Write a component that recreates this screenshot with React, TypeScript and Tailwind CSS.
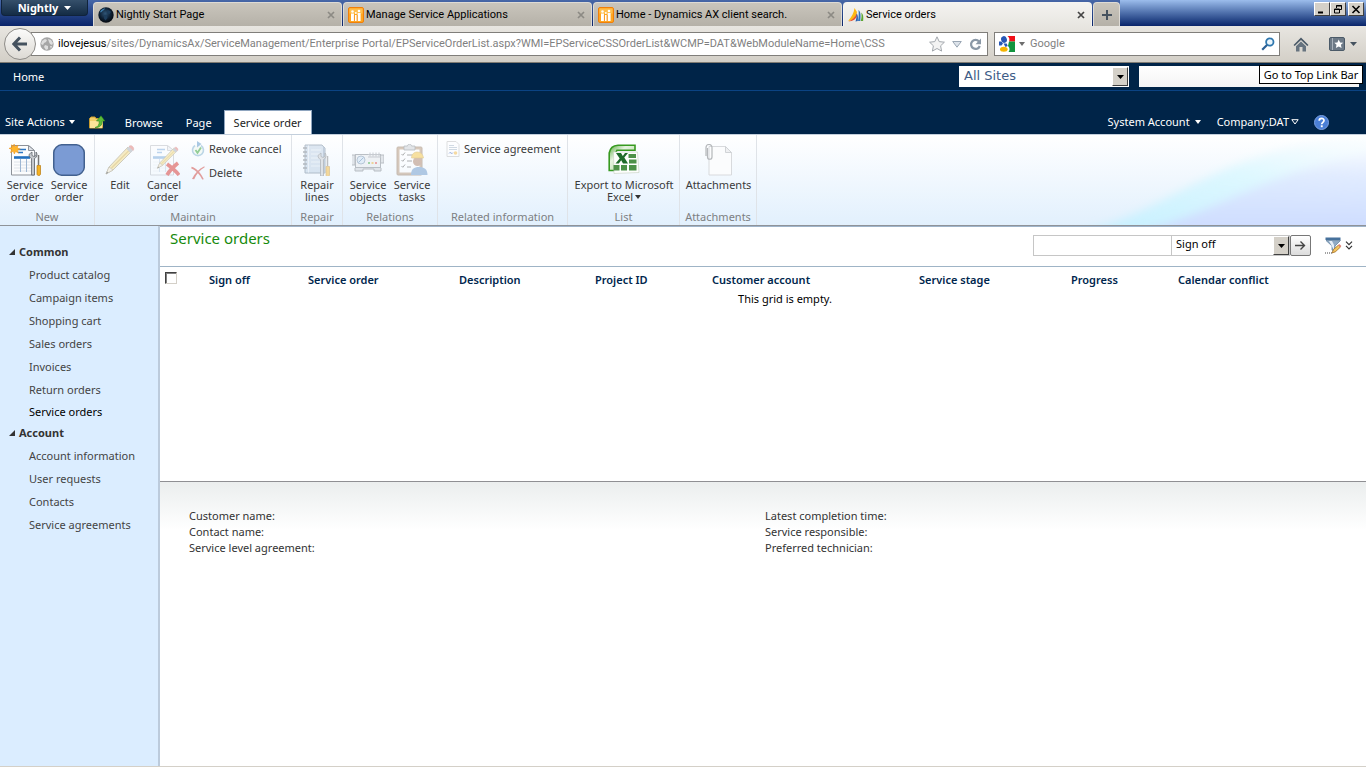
import type { ReactNode } from 'react';
import { useState } from 'react';

interface BrowserTab {
  title: string;
  icon: ReactNode;
}

interface NavSection {
  title: string;
  items: string[];
}

/* ---------- browser icons ---------- */

const GlobeDarkIcon = () => (
  <svg width="16" height="16" viewBox="0 0 16 16" className="shrink-0" aria-hidden="true">
    <defs>
      <radialGradient id="night" cx="45%" cy="40%" r="60%">
        <stop offset="0" stopColor="#2f5577" />
        <stop offset="0.6" stopColor="#0e2033" />
        <stop offset="1" stopColor="#05090f" />
      </radialGradient>
    </defs>
    <circle cx="8" cy="8" r="7.7" fill="url(#night)" />
    <path d="M2 5c1-2 3-3.500 5-3.700-.5 1.500-1.500 2-2.500 2.700C3.500 5 3 6 2 5z" fill="#3f7fae" />
    <path d="M9 3.500c1.500-.8 3 .2 4 1.500l-1.500 2-2-.5zM6 8l3 .5.5 2.500-2 2.500-1.500-2z" fill="#1d3d5c" />
  </svg>
);

const SharePointIcon = () => (
  <svg width="16" height="16" viewBox="0 0 16 16" className="shrink-0" aria-hidden="true">
    <rect x="0.500" y="0.500" width="15" height="15" rx="1.500" fill="#ffa51f" stroke="#f07f09" />
    <rect x="1.500" y="1.500" width="13" height="5" fill="#ffbe4d" />
    <circle cx="4.500" cy="4.500" r="1.300" fill="#fff" />
    <circle cx="11" cy="4" r="1.300" fill="#fff" />
    <circle cx="7.800" cy="6" r="1" fill="#fff" />
    <path d="M3 6.500h3V14H3zM9.600 6h3v8h-3zM6.800 8h2v6h-2z" fill="#fff" />
    <path d="M6.400 8v6M9.200 8v6" stroke="#f9921a" strokeWidth="0.800" />
  </svg>
);

const DynamicsIcon = () => (
  <svg width="16" height="16" viewBox="0 0 16 16" className="shrink-0" aria-hidden="true">
    <path d="M.5 13.500C3.500 10 6 6 6.500 1L9 5c-.5 4-3 8-8.500 9z" fill="#fdb813" />
    <path d="M.3 14.500C4 13 7 10.500 8.800 6.500L9 9c-1.500 3.500-4 5-8.700 5.500z" fill="#e8502f" />
    <path d="M8.500 6.500c1 .5 1.800 3 1.300 7.500l-2.300.5c.8-2 1.200-5 1-8z" fill="#2c5fae" />
    <path d="M10.500 3c2 1.500 2.500 5 1.800 11H10c.8-4 .9-7 .5-11z" fill="#2f75bd" />
    <path d="M13.300 5.500c2 1.500 2.300 4.500 1.800 8.500h-2.300c.8-3 .9-5.500.5-8.500z" fill="#5fa832" />
  </svg>
);

const CloseIcon = ({ dark }: { dark?: boolean }) => (
  <svg width="8" height="8" viewBox="0 0 8 8" aria-hidden="true">
    <path d="M1 1l6 6M7 1L1 7" stroke={dark ? '#444' : '#8c8a84'} strokeWidth="1.700" />
  </svg>
);

const BackIcon = () => (
  <svg width="16" height="16" viewBox="0 0 16 16" aria-hidden="true">
    <path d="M8 1.500L1.800 8 8 14.500M2.500 8H15" fill="none" stroke="#45525f" strokeWidth="3" />
  </svg>
);

const GlobeIcon = () => (
  <svg width="14" height="14" viewBox="0 0 14 14" className="shrink-0" aria-hidden="true">
    <circle cx="7" cy="7" r="6.700" fill="#a6a6a6" />
    <path d="M2 4l3-2 2 1-1 2-2 1-1 2-2-1zM8 2l3 1 2 3-1 2-2-1-1-2zM5 8l3 1v3l-2 1-2-3zM10 9l2 0-1 3z" fill="#dedede" />
  </svg>
);

const StarIcon = () => (
  <svg width="16" height="16" viewBox="0 0 16 16" aria-hidden="true">
    <path d="M8 .8l2.200 4.800 5.200.6-3.800 3.600 1 5.300L8 12.500l-4.600 2.600 1-5.300L.6 6.200l5.200-.6z" fill="#f3f3f3" stroke="#a3a8ad" />
  </svg>
);

const ReloadIcon = () => (
  <svg width="13" height="13" viewBox="0 0 13 13" aria-hidden="true">
    <path d="M10 3.500A4.500 4.500 0 1 0 10.800 8" fill="none" stroke="#8a98a6" strokeWidth="2.200" />
    <path d="M12 .5v5.700H6.500z" fill="#8a98a6" />
  </svg>
);

const GoogleIcon = () => (
  <svg width="16" height="16" viewBox="0 0 16 16" className="shrink-0" aria-hidden="true">
    <rect width="16" height="16" fill="#fff" />
    <path d="M8.500 0H16v5.500h-6c.8-2 .5-4-1.500-5.500z" fill="#f01018" />
    <path d="M10 5.500h6V16H9.500c1.500-2 1.500-4-.5-6z" fill="#12943e" />
    <path d="M0 5.500h2.500l1.500 2-1.500 2H0z" fill="#2757b5" />
    <ellipse cx="5" cy="3.500" rx="2.900" ry="3.400" fill="#2757b5" transform="rotate(-15 5 3.500)" />
    <path d="M4.500 7.500h3.200l1 2.500-2.200 1z" fill="#2757b5" />
    <ellipse cx="4.800" cy="13.200" rx="3.800" ry="2.500" fill="#f4b400" />
  </svg>
);

const MagnifierIcon = () => (
  <svg width="14" height="14" viewBox="0 0 14 14" aria-hidden="true">
    <circle cx="8.800" cy="5" r="3.700" fill="#eaf5fc" stroke="#2f77ae" strokeWidth="1.800" />
    <path d="M6 8L1.200 12.800" stroke="#2a5f95" strokeWidth="2.200" />
  </svg>
);

const HomeIcon = () => (
  <svg width="16" height="15" viewBox="0 0 16 15" aria-hidden="true">
    <path d="M8 .5L15.500 8l-1.200 1L8 3 1.700 9 .5 8z" fill="#4b5a68" />
    <path d="M8 4.500l5 4.700V14.500H9.500V10h-3v4.500H3V9.200z" fill="#66737f" />
  </svg>
);

const BookmarksIcon = () => (
  <svg width="16" height="14" viewBox="0 0 16 14" aria-hidden="true">
    <rect x="0.500" y="0.500" width="15" height="13" rx="1.500" fill="#6d7a87" stroke="#4b5a68" />
    <path d="M3.500 1v12" stroke="#aab3bc" />
    <path d="M9.700 2.500l1.400 2.900 3.100.3-2.300 2.100.7 3.200-2.900-1.600L6.900 11l.6-3.200-2.200-2.100 3.100-.3z" fill="#fff" />
  </svg>
);

const Caret = ({ color = '#fff', width = 7 }: { color?: string; width?: number }) => (
  <svg width={width} height="4" viewBox="0 0 8 4" preserveAspectRatio="none" className="shrink-0" aria-hidden="true">
    <path d="M0 0h8L4 4z" fill={color} />
  </svg>
);

/* ---------- page icons ---------- */

const FolderUpIcon = () => (
  <svg width="16" height="14" viewBox="0 0 16 14" aria-hidden="true">
    <path d="M.5 3.500L2 2h4l1 1.500h6.500V13H.5z" fill="#f2cf6b" stroke="#c79a2e" />
    <path d="M1 6h13l-1 7H1z" fill="#fbe49a" />
    <path d="M6 12.500c3-.5 4.500-3 4.200-6.500H7.500L12 .8 15.800 6h-2.500c.2 4-2.800 7-7.300 6.500z" fill="#5dbb3a" stroke="#2f8a1d" strokeWidth="0.600" />
  </svg>
);

const HelpIcon = () => (
  <svg width="15" height="15" viewBox="0 0 15 15" aria-hidden="true">
    <circle cx="7.500" cy="7.500" r="7" fill="#4a7fd6" stroke="#7ba1e3" />
    <path d="M5.200 5.800c0-3.200 4.800-3.100 4.800-.3 0 1.800-2.300 1.800-2.300 3.700" fill="none" stroke="#fff" strokeWidth="1.700" />
    <rect x="6.800" y="10.300" width="1.900" height="1.900" fill="#fff" />
  </svg>
);

const ReportSheet = () => (
  <>
    <path d="M2.500 1.500h17l6 5v24.500h-23z" fill="#fbfcfd" stroke="#8d9299" />
    <path d="M19.500 1.500v5h6z" fill="#dfe3e8" stroke="#8d9299" />
    <path d="M9 5.500h8M9 8.500h5" stroke="#2d77c4" strokeWidth="1.400" />
    <path d="M5 13.500h16" stroke="#2270bf" strokeWidth="2.600" />
    <path d="M5 18h18M5 21h18M5 24h18M5 27h18" stroke="#dfe4ea" />
    <path d="M11.500 15v13M17.500 15v13" stroke="#9db6d2" />
  </>
);

const Wrench = () => (
  <>
    <path d="M20 10.500c0 2 1 3.300 2.500 4V31h3V14.500c1.500-.7 2.500-2 2.500-4 0-1-.5-2-1-2.500v3.500l-2 1-2-1V8c-.8.700-2 1.500-3 2.500z" fill="#c4c8cd" stroke="#63686e" strokeWidth="0.800" />
    <path d="M29.500 11v10" stroke="#777" strokeWidth="1.500" />
    <path d="M28 21.500h3.500V30c0 2-3.500 2-3.500 0z" fill="#f5b223" stroke="#b87a10" strokeWidth="0.700" />
  </>
);

const ServiceOrderIcon = () => (
  <svg width="32" height="32" viewBox="0 0 32 32" aria-hidden="true">
    <ReportSheet />
    <Wrench />
    <path d="M5 0l1.200 2.800L9 1.200 8.300 4l3 1-2.900 1.200 1 2.800-2.800-1.500L5.300 10l-1-2.700L1.500 8.500l1.200-2.900L0 4.300l3-.8L2.500.8l2.200 1.800z" fill="#ffb52b" stroke="#ef8e11" strokeWidth="0.500" />
  </svg>
);

const OctagonIcon = () => (
  <svg width="32" height="32" viewBox="0 0 32 32" aria-hidden="true">
    <path d="M8.500.75h15C27 .75 31.250 5 31.250 8.500v15c0 3.500-4.250 7.750-7.750 7.750h-15C5 31.250.75 27 .75 23.500v-15C.75 5 5 .75 8.500.75z" fill="#7b9bd4" stroke="#42618f" strokeWidth="1.500" />
  </svg>
);

const PencilShape = () => (
  <>
    <path d="M2 30l3-7L24 3l4 4L9 26z" fill="#f3dc8b" stroke="#8f8566" strokeWidth="0.800" />
    <path d="M7.500 24L26 5.500" stroke="#d8b44c" strokeWidth="1.200" />
    <path d="M5 23l4 3L2 30z" fill="#f4e8cf" stroke="#8f8566" strokeWidth="0.600" />
    <path d="M22.500 5l4 4 2.500-2.500-4-4z" fill="#a7adb5" />
    <path d="M25 2.500c2-2.500 6 1 4.200 4z" fill="#e37b74" stroke="#b55" strokeWidth="0.500" />
    <path d="M2 30l1-2.400 1.400 1.200z" fill="#444" />
  </>
);

const EditIcon = () => (
  <svg width="32" height="32" viewBox="0 0 32 32" className="opacity-50" aria-hidden="true">
    <PencilShape />
  </svg>
);

const CancelOrderIcon = () => (
  <svg width="32" height="32" viewBox="0 0 32 32" className="opacity-50" aria-hidden="true">
    <g opacity="0.6">
      <ReportSheet />
    </g>
    <g transform="translate(8 2) scale(.74)">
      <PencilShape />
    </g>
    <path d="M19 20c4 3 8 6 12 11M30 19c-4 3-8 7-11 12" stroke="#d8342e" strokeWidth="3.600" />
  </svg>
);

const RevokeIcon = () => (
  <svg width="14" height="16" viewBox="0 0 14 16" className="opacity-50" aria-hidden="true">
    <path d="M4 4.500A5.500 5.500 0 1 0 10 4.500" fill="#eef7ee" stroke="#7fb0cf" strokeWidth="1.600" />
    <path d="M6 0l4.500 3L6 6.500z" fill="#5b95c9" />
    <path d="M4.500 9l2 2.800L10 6.500" fill="none" stroke="#2fa02f" strokeWidth="1.800" />
  </svg>
);

const DeleteIcon = () => (
  <svg width="14" height="14" viewBox="0 0 14 14" className="opacity-50" aria-hidden="true">
    <path d="M.5 .8C5 2 10 7 12.800 13.200l-1.600.3C9 9 5 4.500.3 2.600zM13.300.3l.4.900C9 4 5.500 8 3.200 13.200L1 13C3.500 7.500 8 3 13.300.3z" fill="#d0433c" />
  </svg>
);

const RepairIcon = () => (
  <svg width="32" height="32" viewBox="0 0 32 32" className="opacity-45" aria-hidden="true">
    <path d="M4 1h17l3 3v25H4z" fill="#b7cbe1" stroke="#5f7489" />
    <path d="M21 1l3 3v25l-2-2V3z" fill="#7f98b4" />
    <path d="M7.500 1.500v27M10 6h10M10 10h10M10 14h10M10 18h10M10 22h10" stroke="#dfe9f3" />
    <path d="M2 4h4M2 8h4M2 12h4M2 16h4M2 20h4M2 24h4" stroke="#606a74" strokeWidth="1.300" />
    <g transform="translate(-3 1)">
      <Wrench />
    </g>
  </svg>
);

const ObjectsIcon = () => (
  <svg width="32" height="32" viewBox="0 0 32 32" className="opacity-45" aria-hidden="true">
    <path d="M0 11h3v10H0M29 11h3v8h-3" fill="#c7ccd2" stroke="#70777f" />
    <rect x="3.500" y="10.500" width="25" height="13" fill="#e5e8eb" stroke="#70777f" />
    <path d="M16 10.500h12M16 13h13M18 8.500v4M21 8.500v4M24 8.500v4M27 8.500v4" stroke="#8b929a" />
    <circle cx="9" cy="16" r="4" fill="#c8ddf0" stroke="#6d8aa8" />
    <path d="M6.500 18.500l5-5" stroke="#4a7eb0" />
    <rect x="16" y="18" width="2" height="2" fill="#37a23a" />
    <rect x="19.500" y="18" width="2" height="2" fill="#e4a71f" />
    <rect x="23" y="18" width="2" height="2" fill="#d44" />
    <path d="M3 24v3h8v-2h11v2h7v-3" fill="#c7ccd2" stroke="#70777f" />
  </svg>
);

const TasksIcon = () => (
  <svg width="32" height="32" viewBox="0 0 32 32" className="opacity-45" aria-hidden="true">
    <rect x="1" y="3" width="25" height="28" rx="1" fill="#b08c6c" stroke="#8c6e54" />
    <rect x="3.500" y="5.500" width="20" height="23" fill="#fff" />
    <path d="M8 2h3.500c0-2.500 4-2.500 4 0H19v4H8z" fill="#c4c9ce" stroke="#666d74" strokeWidth="0.800" />
    <path d="M5.500 10l1.300 1.300L9 8.500M5.500 16l1.300 1.300L9 14.500M5.500 22l1.300 1.300L9 20.500M11 11h6M11 17h5M11 23h4" fill="none" stroke="#555" />
    <path d="M15 31c0-6 3-8 8-8s8.500 2 8.500 8z" fill="#5f8fc4" />
    <circle cx="21.500" cy="17.500" r="4.500" fill="#a8775a" />
    <path d="M15.500 14c0-8 11-8 12 0z" fill="#f6c02f" stroke="#c3921a" strokeWidth="0.600" />
  </svg>
);

const AgreementIcon = () => (
  <svg width="14" height="16" viewBox="0 0 14 16" className="opacity-45" aria-hidden="true">
    <path d="M1 .5h9l3 3v12H1z" fill="#fff" stroke="#b9b9b9" />
    <path d="M3 4.500h5M3 6.500h8M3 8.500h8" stroke="#9fb0c2" />
    <path d="M3 12.500l1.500-1.500 1 2 1.500-1.500" fill="none" stroke="#3c62c0" />
    <circle cx="9.500" cy="12" r="1.800" fill="#f2b233" />
  </svg>
);

const ExcelIcon = () => (
  <svg width="32" height="32" viewBox="0 0 32 32" aria-hidden="true">
    <defs>
      <linearGradient id="xl" x1="0" y1="0" x2="1" y2="1">
        <stop offset="0" stopColor="#5fae45" />
        <stop offset="0.350" stopColor="#e6f3e0" />
        <stop offset="1" stopColor="#9ccf86" />
      </linearGradient>
    </defs>
    <path d="M1.200 26.500V9C2 4 5 1.500 10 1.200h17v5H9l-2 4v16.300z" fill="url(#xl)" stroke="#379a20" strokeWidth="1.600" />
    <path d="M5.500 8h24l1.500 20.500-25 1z" fill="#fdfefc" stroke="#c4cfbf" strokeWidth="0.600" />
    <path d="M20.500 10h7.500v4h-7.500zM21 15.500h7.500v4H21zM5.500 21h6v5.500h-6zM13 21h6v5.500h-6zM21 21h7.500v5.500H21z" fill="#4d9148" />
    <path d="M8 9h5l1.800 3L17 9h3l-3.700 4.500L20 19.500h-5l-1.800-3.300-2.400 3.300H7.500l4.200-5z" fill="#1f6b2a" />
  </svg>
);

const AttachmentIcon = () => (
  <svg width="32" height="32" viewBox="0 0 32 32" aria-hidden="true">
    <path d="M6 2.500h16.500l6 6V31H6z" fill="#fbfcfd" stroke="#d8dadd" />
    <path d="M22.500 2.500v6h6z" fill="#eff0f2" stroke="#d0d3d6" />
    <path d="M4.500 4v9c0 3 4.500 3 4.500 0V3.500c0-4-6-4-6 0V12" fill="none" stroke="#b4b7ba" strokeWidth="1.200" />
  </svg>
);

const FilterIcon = () => (
  <svg width="17" height="17" viewBox="0 0 17 17" aria-hidden="true">
    <rect x="0.500" y="0.500" width="15" height="2.500" fill="#46719c" />
    <path d="M1 3.500h14.500L10 9v6l-3-2V9z" fill="#8fa9c4" stroke="#5c7c9c" strokeWidth="0.700" />
    <path d="M4 4h3l2 4v5z" fill="#e8f0f8" />
    <path d="M7 16l1.500-3.500L13.500 8l2 2-5 4.700z" fill="#f4c660" stroke="#a66f22" strokeWidth="0.800" />
    <path d="M13.200 8.200l1.200-1.200 2 2-1.200 1.200z" fill="#e0817a" />
    <path d="M0 16h7" stroke="#444" strokeDasharray="1 1" />
  </svg>
);

const RibbonSwoosh = () => (
  <svg viewBox="0 0 380 90" preserveAspectRatio="none" className="absolute top-0 right-0 h-full w-[380px]" aria-hidden="true">
    <defs>
      <linearGradient id="sw1" x1="0" y1="1" x2="0.900" y2="0">
        <stop offset="0" stopColor="#c4efff" />
        <stop offset="0.600" stopColor="#dcf8ff" stopOpacity="0.900" />
        <stop offset="1" stopColor="#f2fcff" stopOpacity="0.200" />
      </linearGradient>
      <linearGradient id="sw2" x1="0" y1="1" x2="0" y2="0">
        <stop offset="0" stopColor="#ccdbff" />
        <stop offset="0.700" stopColor="#dfe8ff" stopOpacity="0.800" />
        <stop offset="1" stopColor="#f0f0ff" stopOpacity="0.300" />
      </linearGradient>
      <filter id="soft" x="-10%" y="-20%" width="120%" height="140%">
        <feGaussianBlur stdDeviation="5" />
      </filter>
    </defs>
    <g filter="url(#soft)">
      <path d="M90 98C190 78 220 12 400 -2v100z" fill="url(#sw1)" />
      <path d="M150 98C230 78 290 30 400 16v82z" fill="url(#sw2)" />
    </g>
  </svg>
);

/* ---------- data ---------- */

const browserTabs: BrowserTab[] = [
  { title: 'Nightly Start Page', icon: <GlobeDarkIcon /> },
  { title: 'Manage Service Applications', icon: <SharePointIcon /> },
  { title: 'Home - Dynamics AX client search.', icon: <SharePointIcon /> },
  { title: 'Service orders', icon: <DynamicsIcon /> },
];

const navSections: NavSection[] = [
  {
    title: 'Common',
    items: ['Product catalog', 'Campaign items', 'Shopping cart', 'Sales orders', 'Invoices', 'Return orders', 'Service orders'],
  },
  {
    title: 'Account',
    items: ['Account information', 'User requests', 'Contacts', 'Service agreements'],
  },
];

const columns = [
  { label: 'Sign off', width: 'w-[99px]' },
  { label: 'Service order', width: 'w-[151px]' },
  { label: 'Description', width: 'w-[136px]' },
  { label: 'Project ID', width: 'w-[117px]' },
  { label: 'Customer account', width: 'w-[207px]' },
  { label: 'Service stage', width: 'w-[152px]' },
  { label: 'Progress', width: 'w-[107px]' },
  { label: 'Calendar conflict', width: '' },
];

const detailFields = [
  ['Customer name:', 'Contact name:', 'Service level agreement:'],
  ['Latest completion time:', 'Service responsible:', 'Preferred technician:'],
];

/* ---------- parts ---------- */

function RibbonGroup({ title, width, children }: { title: string; width: string; children: ReactNode }) {
  return (
    <div className={`${width} shrink-0 flex flex-col border-r border-[#dfe3e8]`}>
      <div className="flex-1 flex pl-[3px] pr-[2px] pt-[9px]">{children}</div>
      <div className="text-center text-[#7d7f82] leading-4 whitespace-nowrap">{title}</div>
    </div>
  );
}

function BigButton({ icon, width = 'w-11', lines }: { icon: ReactNode; width?: string; lines: ReactNode[] }) {
  return (
    <button className={`${width} flex flex-col items-center text-[#3b3b3b] leading-3 whitespace-nowrap`}>
      <span className="pb-[3px]">{icon}</span>
      {lines.map((line, index) => (
        <span key={index} className="flex items-center gap-[2px]">{line}</span>
      ))}
    </button>
  );
}

function SmallButton({ icon, children }: { icon: ReactNode; children: ReactNode }) {
  return (
    <button className="flex items-center gap-1 h-6 pl-[3px] text-[#3b3b3b] leading-4 whitespace-nowrap">
      {icon}
      {children}
    </button>
  );
}

// Classic raised arrow on the right edge of a drop-down
function DropArrow() {
  return (
    <span className="absolute right-[1px] top-[1px] bottom-[1px] w-4 flex items-center justify-center bg-[#d4d0c8] border border-t-white border-l-white border-r-[#404040] border-b-[#404040] pointer-events-none">
      <Caret color="#000" width={7} />
    </span>
  );
}

function WindowButton({ label, children }: { label: string; children: ReactNode }) {
  return (
    <button
      aria-label={label}
      className="w-4 h-[14px] flex items-center justify-center bg-[#d4d0c8] border border-t-white border-l-white border-r-[#404040] border-b-[#404040]"
    >
      <svg width="10" height="9" viewBox="0 0 10 9" fill="none" stroke="#000" aria-hidden="true">
        {children}
      </svg>
    </button>
  );
}

function BrowserChrome() {
  const [search, setSearch] = useState('');

  return (
    <div className="text-[11px] leading-4 text-black font-[Tahoma,Roboto,sans-serif]">
      {/* Title bar and tabs */}
      <div className="h-[26px] flex items-start bg-linear-to-b from-[#4868a8] to-[#0a246a]">
        <div className="flex-1 min-w-0 flex items-start">
          <button className="w-[87px] h-4 ml-[1px] mr-[5px] shrink-0 flex items-center justify-center gap-[6px] rounded-b-sm border border-t-0 border-[#10233c] bg-linear-to-b from-[#35506b] to-[#142c45] text-white font-bold font-['Segoe_UI','Noto_Sans',sans-serif]">
            Nightly
            <Caret />
          </button>
          <div className="flex items-start gap-[1px] pt-[2px] min-w-0">
            {browserTabs.map((tab, index) => {
              const active = index === browserTabs.length - 1;
              return (
                <div
                  key={tab.title}
                  className={`w-[249px] h-6 min-w-0 flex items-center pl-1 pr-[2px] rounded-t-sm border border-b-0 ${
                    active
                      ? 'bg-linear-to-b from-[#f4f3f0] to-[#e8e6e1] border-[#f6f5f2]'
                      : 'bg-linear-to-b from-[#c9c5bc] to-[#b5b1a8] border-[#dedbd5]'
                  }`}
                >
                  {tab.icon}
                  <span className="flex-1 min-w-0 pl-[2px] truncate">{tab.title}</span>
                  <button aria-label={`Close ${tab.title}`} className="p-1">
                    <CloseIcon dark={active} />
                  </button>
                </div>
              );
            })}
            <button aria-label="New tab" className="w-[27px] h-6 shrink-0 flex items-center justify-center rounded-t-sm border border-b-0 border-[#dedbd5] bg-linear-to-b from-[#c9c5bc] to-[#b5b1a8]">
              <svg width="10" height="10" viewBox="0 0 10 10" aria-hidden="true">
                <path d="M5 0v10M0 5h10" stroke="#45525f" strokeWidth="2" />
              </svg>
            </button>
          </div>
        </div>
        <div className="grow max-w-[246px] self-stretch flex justify-end pt-[2px] bg-linear-to-b from-[#9cbdec] to-[#0a246a]">
          <WindowButton label="Minimize">
            <path d="M1 7.500h5" strokeWidth="2" />
          </WindowButton>
          <WindowButton label="Restore">
            <path d="M3.500 3V.5h5v4H7M3 1h6M1.500 4h5v4h-5zM1 4.500h6" />
          </WindowButton>
          <div className="ml-[2px] mr-[2px]">
            <WindowButton label="Close">
              <path d="M1.500 1l7 7M8.500 1l-7 7" strokeWidth="1.600" />
            </WindowButton>
          </div>
        </div>
      </div>

      {/* Navigation bar */}
      <div className="h-[37px] flex items-center pl-1 pr-[9px] border-b border-[#7f7b73] bg-linear-to-b from-[#e8e6e1] to-[#d3cfc7]">
        <button aria-label="Back" className="relative z-10 w-8 h-8 shrink-0 flex items-center justify-center rounded-full border border-[#8e8c88] bg-linear-to-b from-[#fbfbfa] to-[#dddad4]">
          <BackIcon />
        </button>
        <div className="flex-1 min-w-0 h-6 -ml-[5px] pl-2 pr-[5px] flex items-center gap-1 border border-[#807e7a] bg-white">
          <GlobeIcon />
          <div className="flex-1 min-w-0 truncate text-[#7f7f7f]">
            <span className="text-black">ilovejesus</span>
            /sites/DynamicsAx/ServiceManagement/Enterprise Portal/EPServiceOrderList.aspx?WMI=EPServiceCSSOrderList&WCMP=DAT&WebModuleName=Home\CSS
          </div>
          <button aria-label="Bookmark this page"><StarIcon /></button>
          <button aria-label="History" className="px-[3px]">
            <svg width="10" height="7" viewBox="0 0 10 7" aria-hidden="true">
              <path d="M.7.500h8.600L5 6.200z" fill="#dde3ea" stroke="#9aa6b3" />
            </svg>
          </button>
          <button aria-label="Reload"><ReloadIcon /></button>
        </div>
        <div className="w-[286px] h-6 ml-[6px] px-1 flex items-center border border-[#807e7a] bg-white">
          <GoogleIcon />
          <span className="pl-1 pr-[1px]"><Caret color="#6d6d6d" width={6} /></span>
          <input
            aria-label="Search with Google"
            placeholder="Google"
            value={search}
            onChange={(e) => setSearch(e.target.value)}
            className="flex-1 min-w-0 pl-1 outline-none placeholder:text-[#7f7f7f]"
          />
          <button aria-label="Search"><MagnifierIcon /></button>
        </div>
        <button aria-label="Home page" className="ml-[13px]"><HomeIcon /></button>
        <button aria-label="Bookmarks" className="ml-5 flex items-center gap-[5px]">
          <BookmarksIcon />
          <Caret color="#45525f" width={7} />
        </button>
      </div>
    </div>
  );
}

function TopBar() {
  return (
    <header className="bg-[#002448] text-white">
      <div className="relative h-7 flex items-center border-b border-[#0b4383] pl-[13px] pr-[7px]">
        <a href="#home" className="flex-1">Home</a>
        <div className="relative w-[170px] h-[21px]">
          <select aria-label="Search scope" className="appearance-none w-full h-full pl-[5px] pb-[2px] bg-white text-[#3e5c87] text-[13px] leading-4 outline-none font-[Verdana,'DejaVu_Sans',sans-serif]">
            <option>All Sites</option>
          </select>
          <DropArrow />
        </div>
        <input aria-label="Search this site" className="w-[220px] h-[21px] ml-[10px] px-1 bg-linear-to-b from-white to-[#f4f4f4] text-black" />
        <div role="tooltip" className="absolute right-[3px] top-[2px] w-[104px] h-[19px] border border-black bg-white text-black text-center leading-[17px] whitespace-nowrap">
          Go to Top Link Bar
        </div>
      </div>

      <div className="h-[43px] flex items-end">
        <button className="h-6 pl-[5px] flex items-center gap-1">
          Site Actions
          <Caret width={6} />
        </button>
        <button aria-label="Navigate up" className="h-6 ml-[14px] mr-[9px] flex items-center"><FolderUpIcon /></button>
        <nav className="flex">
          <a href="#browse" className="h-6 px-[11px] leading-[26px]">Browse</a>
          <a href="#page" className="h-6 px-3 leading-[26px]">Page</a>
          <a href="#service-order" className="h-6 px-[9px] leading-6 border border-b-0 border-[#8fa5bf] bg-white text-[#222]">Service order</a>
        </nav>
        <div className="ml-auto h-6 flex items-center pr-[37px]">
          <button className="flex items-center gap-[5px]">
            System Account
            <Caret width={6} />
          </button>
          <button className="ml-4 flex items-center gap-[2px]">
            Company:DAT
            <svg width="8" height="6" viewBox="0 0 8 6" aria-hidden="true">
              <path d="M.8.700h6.400L4 5z" fill="none" stroke="#fff" />
            </svg>
          </button>
          <button aria-label="Help" className="ml-[15px]"><HelpIcon /></button>
        </div>
      </div>
    </header>
  );
}

function Ribbon() {
  return (
    <div className="relative h-[92px] flex border-t border-b border-t-[#c3cfdc] border-b-[#8f9399] bg-linear-to-b from-white to-[#e2f0fd]">
      <RibbonSwoosh />
      <RibbonGroup title="New" width="w-[95px]">
        <BigButton icon={<ServiceOrderIcon />} lines={['Service', 'order']} />
        <BigButton icon={<OctagonIcon />} lines={['Service', 'order']} />
      </RibbonGroup>
      <RibbonGroup title="Maintain" width="w-[197px]">
        <BigButton icon={<EditIcon />} lines={['Edit']} />
        <BigButton icon={<CancelOrderIcon />} lines={['Cancel', 'order']} />
        <div className="pl-[2px] -mt-[7px] flex flex-col">
          <SmallButton icon={<RevokeIcon />}>Revoke cancel</SmallButton>
          <SmallButton icon={<DeleteIcon />}>Delete</SmallButton>
        </div>
      </RibbonGroup>
      <RibbonGroup title="Repair" width="w-[51px]">
        <BigButton icon={<RepairIcon />} lines={['Repair', 'lines']} />
      </RibbonGroup>
      <RibbonGroup title="Relations" width="w-[95px]">
        <BigButton icon={<ObjectsIcon />} lines={['Service', 'objects']} />
        <BigButton icon={<TasksIcon />} lines={['Service', 'tasks']} />
      </RibbonGroup>
      <RibbonGroup title="Related information" width="w-[130px]">
        <div className="pl-[2px] -mt-[7px]">
          <SmallButton icon={<AgreementIcon />}>Service agreement</SmallButton>
        </div>
      </RibbonGroup>
      <RibbonGroup title="List" width="w-[112px]">
        <BigButton
          icon={<ExcelIcon />}
          width="w-full"
          lines={['Export to Microsoft', <>Excel <Caret color="#333" width={6} /></>]}
        />
      </RibbonGroup>
      <RibbonGroup title="Attachments" width="w-[77px]">
        <BigButton icon={<AttachmentIcon />} width="w-full" lines={['Attachments']} />
      </RibbonGroup>
    </div>
  );
}

function Sidebar() {
  return (
    <nav className="w-40 shrink-0 pt-[15px] bg-[#dbedff] border-r-2 border-[#bccbdc]">
      {navSections.map((section) => (
        <div key={section.title}>
          <h2 className="h-[22px] flex items-center gap-1 pl-[9px] font-bold text-[#333]">
            <svg width="6" height="6" viewBox="0 0 6 6" aria-hidden="true">
              <path d="M6 0v6H0z" fill="#333" />
            </svg>
            {section.title}
          </h2>
          <ul>
            {section.items.map((item) => (
              <li key={item}>
                <a
                  href="#list"
                  className={`block pl-[29px] ${item === 'Service orders' ? 'leading-[21px] text-black' : 'leading-[23px] text-[#444]'}`}
                >
                  {item}
                </a>
              </li>
            ))}
          </ul>
        </div>
      ))}
    </nav>
  );
}

function OrderList() {
  return (
    <main className="flex-1 min-w-0 flex flex-col border-t border-[#9fb4ca] bg-white">
      <div className="h-10 flex items-start border-b border-[#9fb4c6] pl-[10px] pr-[13px]">
        <h1 className="flex-1 text-[15px] leading-[22px] text-[#168a0c]">Service orders</h1>
        <div className="flex items-center pt-2">
          <input aria-label="Filter text" className="w-[139px] h-[21px] px-1 border border-[#c6c6c6] outline-none" />
          <div className="relative w-[119px] h-[21px] -ml-[1px]">
            <select aria-label="Filter field" className="appearance-none w-full h-full pl-1 pb-[3px] border border-[#c6c6c6] bg-white text-black outline-none">
              {columns.map((column) => (
                <option key={column.label}>{column.label}</option>
              ))}
            </select>
            <DropArrow />
          </div>
          <button aria-label="Apply filter" className="w-[21px] h-[21px] flex items-center justify-center rounded-xs border border-[#777] bg-linear-to-b from-white to-[#dcdcdc]">
            <svg width="11" height="9" viewBox="0 0 11 9" aria-hidden="true">
              <path d="M0 4.500h9.500M5.500 .500l4 4-4 4" fill="none" stroke="#444" strokeWidth="1.400" />
            </svg>
          </button>
          <button aria-label="Advanced filter" className="ml-[14px] flex items-center gap-[3px]">
            <FilterIcon />
            <svg width="8" height="9" viewBox="0 0 8 9" aria-hidden="true">
              <path d="M1 .700l3 3 3-3M1 4.900l3 3 3-3" fill="none" stroke="#333" strokeWidth="1.200" />
            </svg>
          </button>
        </div>
      </div>

      <div className="h-[214px]">
        <table className="w-full table-fixed text-left">
          <thead>
            <tr className="h-6">
              <th className="w-11 pl-[5px] align-top pt-[5px]">
                <input
                  type="checkbox"
                  aria-label="Select all"
                  className="block appearance-none w-3 h-3 bg-white border border-t-[#404040] border-l-[#404040] border-r-[#d4d0c8] border-b-[#d4d0c8] shadow-[inset_1px_1px_0_#808080]"
                />
              </th>
              {columns.map((column) => (
                <th key={column.label} className={`${column.width} pl-[5px] pt-[2px] font-semibold text-[#00264d] whitespace-nowrap`}>
                  {column.label}
                </th>
              ))}
            </tr>
          </thead>
          <tbody>
            <tr>
              <td />
              <td colSpan={8} className="text-center text-black">This grid is empty.</td>
            </tr>
          </tbody>
        </table>
      </div>

      <section className="flex-1 border-t border-[#8f8f93]">
        <div className="grid grid-cols-2 pt-[26px] pl-[29px] pr-[25px] bg-linear-to-b from-[#ebeeee] to-white to-[48px] text-[#333]">
          {detailFields.map((fields) => (
            <div key={fields[0]}>
              {fields.map((field) => (
                <p key={field}>{field}</p>
              ))}
            </div>
          ))}
        </div>
      </section>
    </main>
  );
}

export default function App() {
  return (
    <div className="min-h-screen flex flex-col bg-white text-[11px] leading-4 font-['Segoe_UI','Noto_Sans',sans-serif]">
      <BrowserChrome />
      <TopBar />
      <Ribbon />
      <div className="flex-1 flex">
        <Sidebar />
        <OrderList />
      </div>
      <div className="h-[2px] border-t border-[#d4d0c8]" />
    </div>
  );
}
